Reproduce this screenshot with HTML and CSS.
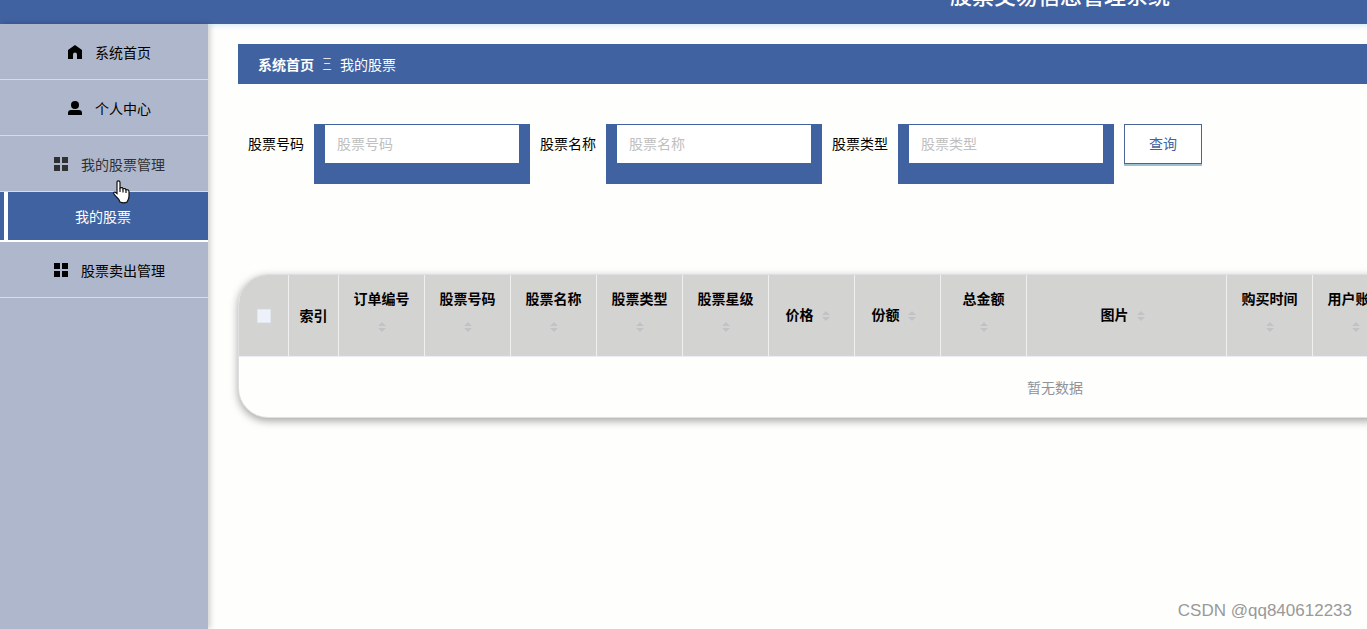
FILE: index.html
```html
<!DOCTYPE html>
<html lang="zh-CN">
<head>
<meta charset="utf-8">
<title>股票交易信息管理系统</title>
<link rel="stylesheet" href="styles.css">
</head>
<body>
<svg class="defs" aria-hidden="true">
  <symbol id="grid" viewBox="0 0 14 14"><path d="M0 0h6v6H0zM8 0h6v6H8zM0 8h6v6H0zM8 8h6v6H8z"/></symbol>
  <symbol id="sort" viewBox="0 0 10 12"><path d="M5 1l4 4H1zM5 11L1 7h8z"/></symbol>
</svg>
<div class="page">
  <header class="topbar"><h1 class="title">股票交易信息管理系统</h1></header>
  <div class="body">
    <nav class="sidebar">
      <a class="item" href="#"><svg class="icon" viewBox="0 0 14 14"><path d="M7 0l7 5v9H9V9.500a2 2 0 0 0-4 0V14H0V5z"/></svg>系统首页</a>
      <a class="item" href="#"><svg class="icon" viewBox="0 0 14 14"><circle cx="7" cy="4" r="4"/><path d="M0 14v-2q0-3 3-3h8q3 0 3 3v2z"/></svg>个人中心</a>
      <a class="item hover" href="#"><svg class="icon"><use href="#grid"/></svg>我的股票管理</a>
      <a class="subitem" href="#">我的股票</a>
      <a class="item" href="#"><svg class="icon"><use href="#grid"/></svg>股票卖出管理</a>
    </nav>
    <main class="main">
      <div class="crumbs"><a class="home" href="#">系统首页</a><span class="sep">Ξ</span><span>我的股票</span></div>
      <form class="search">
        <label class="label" for="code">股票号码</label>
        <div class="box"><input class="input" id="code" type="text" placeholder="股票号码"></div>
        <label class="label" for="name">股票名称</label>
        <div class="box"><input class="input" id="name" type="text" placeholder="股票名称"></div>
        <label class="label" for="type">股票类型</label>
        <div class="box"><input class="input" id="type" type="text" placeholder="股票类型"></div>
        <button class="query" type="button">查询</button>
      </form>
      <div class="card">
        <table class="table">
          <colgroup><col class="narrow"><col class="narrow"><col class="mid" span="8"><col class="wide"><col class="mid" span="2"><col></colgroup>
          <thead>
            <tr>
              <th><input class="check" type="checkbox" aria-label="全选"></th>
              <th>索引</th>
              <th>订单编号<span class="caret"><svg class="arrows"><use href="#sort"/></svg></span></th>
              <th>股票号码<span class="caret"><svg class="arrows"><use href="#sort"/></svg></span></th>
              <th>股票名称<span class="caret"><svg class="arrows"><use href="#sort"/></svg></span></th>
              <th>股票类型<span class="caret"><svg class="arrows"><use href="#sort"/></svg></span></th>
              <th>股票星级<span class="caret"><svg class="arrows"><use href="#sort"/></svg></span></th>
              <th>价格<span class="caret"><svg class="arrows"><use href="#sort"/></svg></span></th>
              <th>份额<span class="caret"><svg class="arrows"><use href="#sort"/></svg></span></th>
              <th>总金额<span class="caret"><svg class="arrows"><use href="#sort"/></svg></span></th>
              <th>图片<span class="caret"><svg class="arrows"><use href="#sort"/></svg></span></th>
              <th>购买时间<span class="caret"><svg class="arrows"><use href="#sort"/></svg></span></th>
              <th>用户账号<span class="caret"><svg class="arrows"><use href="#sort"/></svg></span></th>
              <th></th>
            </tr>
          </thead>
          <tbody><tr><td class="empty" colspan="14">暂无数据</td></tr></tbody>
        </table>
      </div>
    </main>
  </div>
</div>
<svg class="pointer" viewBox="0 0 18 24" aria-hidden="true"><path d="M4 2.500q0-1.700 1.500-1.700T7 2.500V8q2.600-1 3 .8 2.300-.9 2.900.9 3.100-.6 3.100 2V16q0 2-1 4l-1 2q-3 1.600-7 0Q6 19 3 16.500L1 14q-1-2 1-2l2 1.500z" fill="#fff" stroke="#111" stroke-width="1.200"/><path d="M7 8v4M10 9v3.500M13 10v3" stroke="#111" stroke-width="1.200" fill="none"/></svg>
<div class="watermark">CSDN @qq840612233</div>
</body>
</html>
```

FILE: styles.css
```css
* { box-sizing: border-box; }
body {
  margin: 0;
  height: 100vh;
  overflow: hidden;
  position: relative;
  background: #fefefd;
  color: #000;
  font: 14px/20px "Noto Sans CJK SC", sans-serif;
}
a { color: inherit; text-decoration: none; }
.defs { position: absolute; width: 0; height: 0; }

/* The page is wider than the window and scrolled down by 36px */
.page {
  min-width: 1902px;
  min-height: 100vh;
  display: flex;
  flex-direction: column;
}
.topbar {
  margin-top: -36px;
  height: 60px;
  padding-left: 218px;
  background: #4162a1;
  box-shadow: 0 1px 6px #cfe6f5;
  text-align: center;
}
.title { margin: 0; color: #fff; font-size: 22px; font-weight: 500; line-height: 60px; }
.body { flex: 1; display: flex; }

.sidebar {
  width: 208px;
  flex: none;
  background: #aeb7cc;
  box-shadow: 2px 0 6px rgba(0, 0, 0, .2);
}
.item {
  display: flex;
  align-items: center;
  justify-content: center;
  gap: 13px;
  height: 56px;
  padding-left: 11px;
  border-bottom: 1px solid #d5dcea;
  line-height: 18px;
}
.hover { color: #303133; }
.icon { width: 14px; height: 14px; fill: currentColor; }
.subitem {
  display: flex;
  align-items: center;
  height: 50px;
  padding-left: 75px;
  border-bottom: 2px solid #fff;
  background: linear-gradient(90deg, #4162a1 4px, #fff 4px, #fff 8px, #4162a1 8px);
  color: #fff;
}

.main { flex: 1; padding: 20px 30px; }
.crumbs {
  display: flex;
  align-items: center;
  gap: 8px;
  height: 40px;
  padding: 0 20px;
  background: #4162a1;
  color: #fff;
  line-height: 18px;
}
.home { font-weight: 700; }
.sep { width: 10px; text-align: center; font-family: "Open Sans", sans-serif; font-size: 16px; font-weight: 300; }

.search { display: flex; align-items: flex-start; gap: 10px; margin: 40px 10px 90px; }
.label { line-height: 38px; }
.box {
  width: 216px;
  padding: 1px 11px 21px;
  background: #4162a1;
}
.input {
  display: block;
  width: 100%;
  height: 38px;
  padding: 0 12px 2px;
  border: 0;
  background: #fff;
  font: inherit;
}
.input::placeholder { color: #c0c0c0; }
.query {
  width: 78px;
  height: 40px;
  padding: 0 0 2px;
  border: 1px solid #4c6495;
  background: #fff;
  box-shadow: 0 2px 0 #9fc0d0;
  color: #4162a1;
  font: inherit;
}

.card {
  overflow: hidden;
  border: 1px solid #dddfe0;
  border-radius: 30px;
  box-shadow: 0 3px 8px rgba(0, 0, 0, .35);
  background: #fefefd;
}
.table { width: 100%; table-layout: fixed; border-collapse: separate; border-spacing: 0; }
.narrow { width: 50px; }
.mid { width: 86px; }
.wide { width: 200px; }
.table th {
  padding: 12px 10px;
  border-right: 1px solid #f0f0f0;
  border-bottom: 1px solid #ebeef5;
  background: #d3d3d2;
  line-height: 23px;
  vertical-align: middle;
}
.caret {
  display: inline-flex;
  align-items: center;
  justify-content: center;
  width: 24px;
  height: 34px;
  vertical-align: middle;
}
.arrows { width: 10px; height: 12px; fill: #c0c2c5; }
.check {
  appearance: none;
  display: block;
  width: 14px;
  height: 14px;
  margin: 0 auto;
  border: 1px solid #e2e6ef;
  background: #edf1f9;
}
.empty { padding: 0; line-height: 60px; text-align: center; color: #909399; }

.pointer { position: absolute; left: 113px; top: 180px; width: 18px; height: 24px; }
.watermark {
  position: absolute;
  right: 15px;
  bottom: 8px;
  color: #999;
  font: 17px/20px "Liberation Sans", Arial, sans-serif;
}
```
